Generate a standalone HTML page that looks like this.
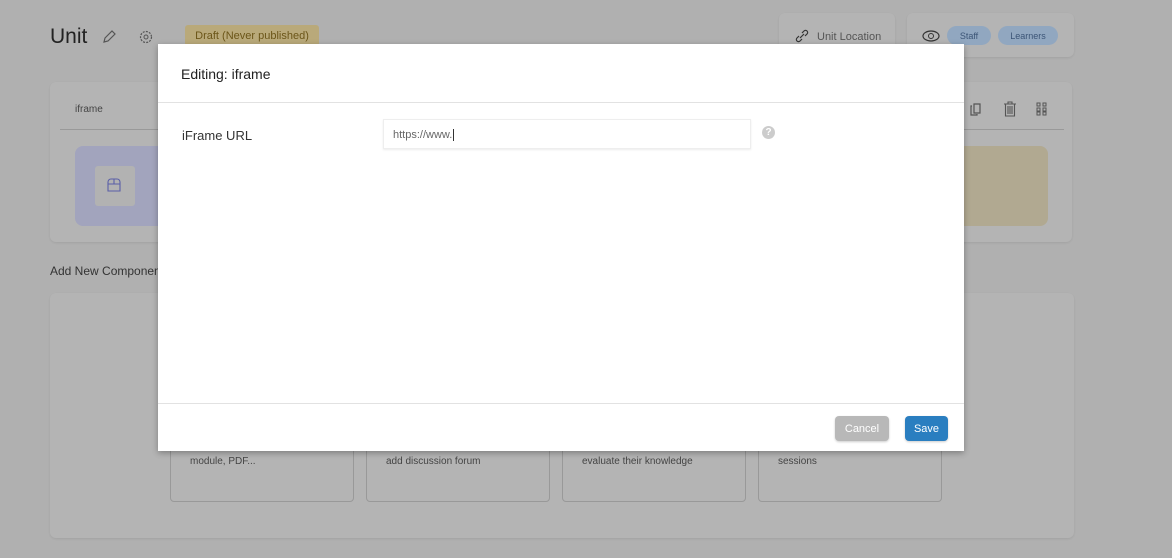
<!DOCTYPE html>
<html><head><style>
*{box-sizing:border-box;margin:0;padding:0}
body{width:1172px;height:558px;background:#b0b0b0;font-family:"Liberation Sans",sans-serif;position:relative;overflow:hidden}
.a{position:absolute}
.card{background:#b4b4b4;border-radius:6px;box-shadow:0 1px 2px rgba(0,0,0,.08)}
.t{color:#333}
</style></head><body>
<div class="a t" style="left:50px;top:25px;font-size:21px;color:#222">Unit</div>
<svg class="a" style="left:101px;top:29px" width="16" height="16" viewBox="0 0 16 16"><path d="M3 13l1-4 7-7 3 3-7 7z" fill="none" stroke="#555" stroke-width="1.2"/></svg>
<svg class="a" style="left:138px;top:29px" width="16" height="16" viewBox="0 0 16 16"><circle cx="8" cy="8" r="5.5" fill="none" stroke="#555" stroke-width="1.2" stroke-dasharray="2 1.2"/><circle cx="8" cy="8" r="2" fill="none" stroke="#555"/></svg>
<div class="a" style="left:185px;top:25px;width:134px;height:21px;background:#b9a97a;border-radius:3px;color:#6b5518;font-size:11px;text-align:center;line-height:22px">Draft (Never published)</div>
<div class="a card" style="left:779px;top:13px;width:116px;height:44px"></div>
<svg class="a" style="left:794px;top:28px" width="16" height="16" viewBox="0 0 16 16"><path d="M6 10l4-4M5 8l-2 2a2 2 0 003 3l2-2M11 8l2-2a2 2 0 00-3-3L8 5" fill="none" stroke="#333" stroke-width="1.2"/></svg>
<div class="a" style="left:817px;top:31px;font-size:11px;color:#555">Unit Location</div>
<div class="a card" style="left:907px;top:13px;width:167px;height:44px"></div>
<svg class="a" style="left:922px;top:29px" width="18" height="14" viewBox="0 0 18 14"><ellipse cx="9" cy="7" rx="8" ry="5" fill="none" stroke="#333" stroke-width="1.2"/><circle cx="9" cy="7" r="2.5" fill="none" stroke="#333"/></svg>
<div class="a" style="left:947px;top:26px;width:44px;height:19px;background:#91a7c0;border-radius:10px;font-size:9px;color:#3c5577;text-align:center;line-height:20px">Staff</div>
<div class="a" style="left:998px;top:26px;width:60px;height:19px;background:#91a7c0;border-radius:10px;font-size:9px;color:#3c5577;text-align:center;line-height:20px">Learners</div>

<div class="a card" style="left:50px;top:82px;width:1022px;height:160px"></div>
<div class="a" style="left:75px;top:104px;font-size:10px;color:#444">iframe</div>
<div class="a" style="left:60px;top:129px;width:1004px;height:1px;background:#999"></div>
<div class="a" style="left:75px;top:146px;width:200px;height:80px;background:#a2a4bd;border-radius:8px"></div>
<div class="a" style="left:95px;top:166px;width:40px;height:40px;background:#b2b2b2;border-radius:3px"></div>
<svg class="a" style="left:107px;top:178px" width="14" height="14" viewBox="0 0 14 14"><path d="M1 4a3 3 0 013-3h6a3 3 0 013 3v9H1zM1 6h12M7 1v5" fill="none" stroke="#5a5fa8" stroke-width="1.1"/></svg>
<div class="a" style="left:900px;top:146px;width:148px;height:80px;background:#b1a991;border-radius:8px"></div>
<div class="a" style="left:50px;top:264px;font-size:12px;color:#333">Add New Component</div>
<div class="a card" style="left:50px;top:293px;width:1024px;height:245px"></div>
<div class="a" style="left:170px;top:430px;width:184px;height:72px;border:1px solid #999;border-radius:4px;background:#b4b4b4"><div style="font-size:10px;color:#444;position:absolute;left:19px;top:25px">module, PDF...</div></div>
<div class="a" style="left:366px;top:430px;width:184px;height:72px;border:1px solid #999;border-radius:4px;background:#b4b4b4"><div style="font-size:10px;color:#444;position:absolute;left:19px;top:25px">add discussion forum</div></div>
<div class="a" style="left:562px;top:430px;width:184px;height:72px;border:1px solid #999;border-radius:4px;background:#b4b4b4"><div style="font-size:10px;color:#444;position:absolute;left:19px;top:25px">evaluate their knowledge</div></div>
<div class="a" style="left:758px;top:430px;width:184px;height:72px;border:1px solid #999;border-radius:4px;background:#b4b4b4"><div style="font-size:10px;color:#444;position:absolute;left:19px;top:25px">sessions</div></div>
<svg class="a" style="left:968px;top:101px" width="16" height="16" viewBox="0 0 16 16"><path d="M6 3h6v9H6zM4 5H3v9h6v-1" fill="none" stroke="#555" stroke-width="1.2"/></svg>
<svg class="a" style="left:1003px;top:101px" width="14" height="16" viewBox="0 0 14 16"><path d="M1 3h12M5 3V1h4v2M2.5 3v12h9V3M5 5v8M7 5v8M9 5v8" fill="none" stroke="#555" stroke-width="1.1"/></svg>
<svg class="a" style="left:1036px;top:102px" width="12" height="14" viewBox="0 0 12 14"><g fill="none" stroke="#555"><rect x="1" y="1" width="3" height="3"/><rect x="7" y="1" width="3" height="3"/><rect x="1" y="6" width="3" height="3"/><rect x="7" y="6" width="3" height="3"/><rect x="1" y="10" width="3" height="3"/><rect x="7" y="10" width="3" height="3"/></g></svg>

<div class="a" style="left:158px;top:44px;width:806px;height:407px;background:#fff;box-shadow:0 2px 6px rgba(0,0,0,.3)">
<div class="a" style="left:23px;top:22px;font-size:14px;color:#222">Editing: iframe</div>
<div class="a" style="left:0;top:58px;width:806px;height:1px;background:#e2e2e2"></div>
<div class="a" style="left:24px;top:84px;font-size:13px;color:#333">iFrame URL</div>
<div class="a" style="left:225px;top:75px;width:368px;height:30px;border:1px solid #eee;box-shadow:0 1px 2px rgba(0,0,0,.08)"><span style="position:absolute;left:9px;top:9px;font-size:11px;color:#666">https://www.<span style="border-left:1px solid #333;margin-left:1px"></span></span></div>
<div class="a" style="left:604px;top:82px;width:13px;height:13px;border-radius:50%;background:#ccc;color:#fff;font-size:10px;font-weight:bold;text-align:center;line-height:13px">?</div>
<div class="a" style="left:0;top:359px;width:806px;height:1px;background:#e2e2e2"></div>
<div class="a" style="left:677px;top:372px;width:54px;height:25px;background:#b8b8b8;border-radius:4px;color:#fff;font-size:11px;text-align:center;line-height:27px;box-shadow:0 1px 2px rgba(0,0,0,.2)">Cancel</div>
<div class="a" style="left:747px;top:372px;width:43px;height:25px;background:#2a7ec0;border-radius:4px;color:#fff;font-size:11px;text-align:center;line-height:27px;box-shadow:0 1px 2px rgba(0,0,0,.2)">Save</div>
</div>
</body></html>
